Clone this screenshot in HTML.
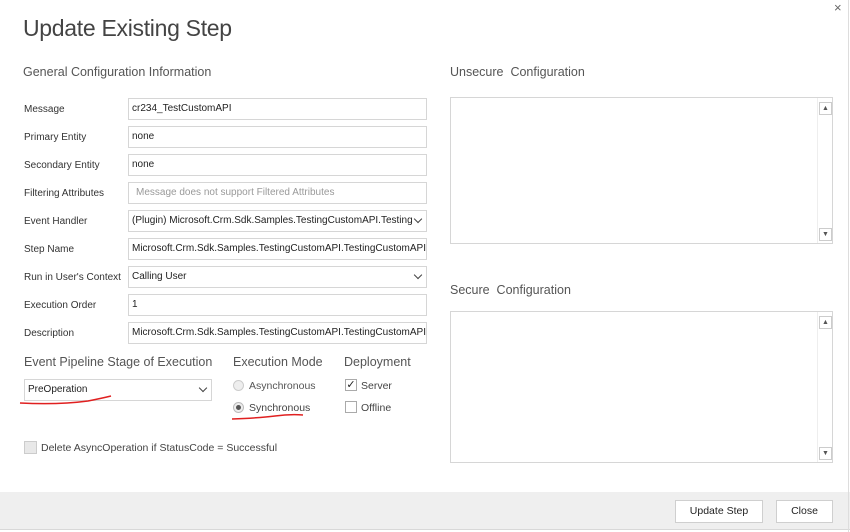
<!DOCTYPE html>
<html><head><style>
*{box-sizing:border-box;margin:0;padding:0}
body{width:850px;height:532px;background:#fff;font-family:"Liberation Sans",sans-serif;position:relative;overflow:hidden;color:#222}
.a{position:absolute}
.t{font-size:23px;color:#444;left:23px;top:15px;font-weight:normal;letter-spacing:-0.3px}
.h{font-size:12.5px;color:#555}
.lbl{font-size:10px;color:#333;left:24px}
.in{left:128px;width:299px;height:22px;border:1px solid #d6d6d6;font-size:10px;padding:4px 14px 0 3px;white-space:nowrap;overflow:hidden;color:#222}
.chev{position:absolute;right:5px;top:5px;width:6px;height:6px;border-right:1px solid #444;border-bottom:1px solid #444;transform:rotate(45deg);background:#fff}
.ta{border:1px solid #d6d6d6}
.sb{position:absolute;right:0;top:0;bottom:0;width:15px;border-left:1px solid #eee}
.sbb{position:absolute;left:1px;width:13px;height:13px;border:1px solid #ccc;background:#fff;font-size:7px;color:#555;text-align:center;line-height:11px}
.btn{border:1px solid #cfcfcf;background:#fff;font-size:10.5px;text-align:center;line-height:21px;height:23px}
.sm{font-size:10.5px;color:#444}
</style></head><body>
<div class="a" style="left:834px;top:0;font-size:13px;color:#666">×</div>
<div class="a t">Update Existing Step</div>
<div class="a h" style="left:23px;top:65px">General Configuration Information</div>
<div class="a h" style="left:450px;top:65px">Unsecure&nbsp; Configuration</div>
<div class="a h" style="left:450px;top:283px">Secure&nbsp; Configuration</div>

<div class="a lbl" style="top:104px">Message</div>
<div class="a in" style="top:98px">cr234_TestCustomAPI</div>
<div class="a lbl" style="top:132px">Primary Entity</div>
<div class="a in" style="top:126px">none</div>
<div class="a lbl" style="top:160px">Secondary Entity</div>
<div class="a in" style="top:154px">none</div>
<div class="a lbl" style="top:188px">Filtering Attributes</div>
<div class="a in" style="top:182px;color:#999;padding-left:7px">Message does not support Filtered Attributes</div>
<div class="a lbl" style="top:216px">Event Handler</div>
<div class="a in" style="top:210px">(Plugin) Microsoft.Crm.Sdk.Samples.TestingCustomAPI.Testing<span class="chev"></span></div>
<div class="a lbl" style="top:244px">Step Name</div>
<div class="a in" style="top:238px;padding-right:0">Microsoft.Crm.Sdk.Samples.TestingCustomAPI.TestingCustomAPI: cr234</div>
<div class="a lbl" style="top:272px">Run in User's Context</div>
<div class="a in" style="top:266px">Calling User<span class="chev"></span></div>
<div class="a lbl" style="top:300px">Execution Order</div>
<div class="a in" style="top:294px">1</div>
<div class="a lbl" style="top:328px">Description</div>
<div class="a in" style="top:322px;padding-right:0">Microsoft.Crm.Sdk.Samples.TestingCustomAPI.TestingCustomAPI: cr234</div>

<div class="a h" style="left:24px;top:355px">Event Pipeline Stage of Execution</div>
<div class="a h" style="left:233px;top:355px">Execution Mode</div>
<div class="a h" style="left:344px;top:355px">Deployment</div>
<div class="a in" style="left:24px;top:379px;width:188px">PreOperation<span class="chev"></span></div>
<svg class="a" style="left:18px;top:392px" width="100" height="14"><path d="M2 11 Q40 13 70 9 Q85 6 93 4" stroke="#e02020" stroke-width="1.5" fill="none"/></svg>
<div class="a" style="left:233px;top:380px;width:11px;height:11px;border-radius:50%;border:1px solid #ccc;background:#eee"></div>
<div class="a sm" style="left:249px;top:380px;color:#555">Asynchronous</div>
<div class="a" style="left:233px;top:402px;width:11px;height:11px;border-radius:50%;border:1px solid #bbb;background:#eee"><div style="margin:2px;width:5px;height:5px;border-radius:50%;background:#555"></div></div>
<div class="a sm" style="left:249px;top:402px">Synchronous</div>
<svg class="a" style="left:230px;top:410px" width="80" height="12"><path d="M2 9 Q30 8 45 6 Q60 4 73 5" stroke="#e02020" stroke-width="1.5" fill="none"/></svg>
<div class="a" style="left:345px;top:379px;width:12px;height:12px;border:1px solid #aaa;font-size:11px;line-height:10px;text-align:center">✓</div>
<div class="a sm" style="left:361px;top:380px">Server</div>
<div class="a" style="left:345px;top:401px;width:12px;height:12px;border:1px solid #aaa"></div>
<div class="a sm" style="left:361px;top:402px">Offline</div>
<div class="a" style="left:24px;top:441px;width:13px;height:13px;border:1px solid #ccc;background:#e8e8e8"></div>
<div class="a sm" style="left:41px;top:442px">Delete AsyncOperation if StatusCode = Successful</div>

<div class="a ta" style="left:450px;top:97px;width:383px;height:147px"><div class="sb"><div class="sbb" style="top:4px">▲</div><div class="sbb" style="bottom:2px">▼</div></div></div>
<div class="a ta" style="left:450px;top:311px;width:383px;height:152px"><div class="sb"><div class="sbb" style="top:4px">▲</div><div class="sbb" style="bottom:2px">▼</div></div></div>

<div class="a" style="left:0;top:492px;width:850px;height:38px;background:#efefef;border-bottom:1px solid #d8d8d8"></div>
<div class="a" style="left:848px;top:0;width:1px;height:532px;background:#ddd"></div>
<div class="a btn" style="left:675px;top:500px;width:88px">Update Step</div>
<div class="a btn" style="left:776px;top:500px;width:57px">Close</div>
</body></html>
